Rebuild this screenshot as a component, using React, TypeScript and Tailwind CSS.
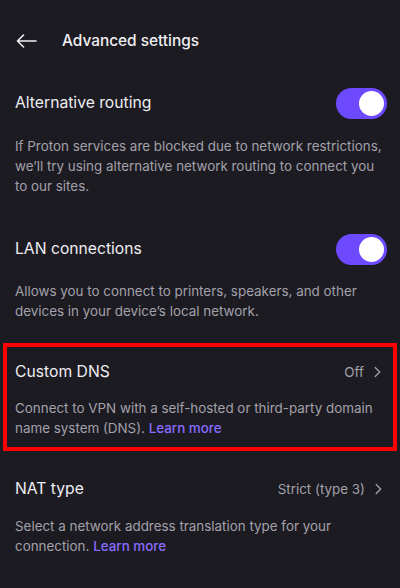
const font = { fontFamily: 'Inter, "Noto Sans", sans-serif' };

function Toggle() {
  return (
    <div className="flex h-[31px] w-[51px] items-center justify-end rounded-full bg-[#6d4aff] pr-[3px]">
      <div className="h-[25px] w-[25px] rounded-full bg-white" />
    </div>
  );
}

function Chevron() {
  return (
    <svg width="7" height="12" viewBox="0 0 7 12" fill="none" className="ml-[10px]">
      <path d="M1.2 1.5L5.7 6L1.2 10.5" stroke="#a3a1aa" strokeWidth="1.3" strokeLinecap="round" strokeLinejoin="round" />
    </svg>
  );
}

function Link() {
  return <span className="font-medium text-[#8a6cff]">Learn more</span>;
}

export default function App() {
  return (
    <div className="h-[588px] w-[400px] overflow-hidden bg-[#1c1b22] text-[#efeef2]" style={font}>
      <div className="flex h-[82px] items-center pl-[16px]">
        <svg width="21" height="14" viewBox="0 0 21 14" fill="none">
          <path d="M20 7H1.5M7.5 1L1.5 7L7.5 13" stroke="#efeef2" strokeWidth="1.6" strokeLinecap="round" strokeLinejoin="round" />
        </svg>
        <span className="ml-[25px] text-[15.4px] font-medium">Advanced settings</span>
      </div>

      <div className="pt-[5px] pl-[15px] pr-[13px]">
        <div className="flex h-8 items-center justify-between">
          <span className="text-[15.7px]">Alternative routing</span>
          <Toggle />
        </div>
        <p className="mt-[17px] pr-[4px] text-[13.4px] leading-[20px] text-[#a3a1aa]">
          If Proton services are blocked due to network restrictions, we’ll try using alternative network routing to connect you to our sites.
        </p>
      </div>

      <div className="mt-[37px] pl-[15px] pr-[13px]">
        <div className="flex h-8 items-center justify-between">
          <span className="text-[15.7px]">LAN connections</span>
          <Toggle />
        </div>
        <p className="mt-[16px] pr-[4px] text-[13.4px] leading-[20px] text-[#a3a1aa]">
          Allows you to connect to printers, speakers, and other devices in your device’s local network.
        </p>
      </div>

      <div className="mx-[3px] mt-[22px] border-4 border-[#ff0000] pt-[13px] pb-[9px] pl-[8px] pr-[12px]">
        <div className="flex h-6 items-center justify-between">
          <span className="text-[15.7px]">Custom DNS</span>
          <div className="flex items-center text-[13.4px] text-[#a3a1aa]">
            Off
            <Chevron />
          </div>
        </div>
        <p className="mt-[14px] text-[13.4px] leading-[20px] text-[#a3a1aa]">
          Connect to VPN with a self-hosted or third-party domain name system (DNS). <Link />
        </p>
      </div>

      <div className="mt-[26px] pl-[15px] pr-[18px]">
        <div className="flex h-6 items-center justify-between">
          <span className="text-[15.7px]">NAT type</span>
          <div className="flex items-center text-[13.4px] text-[#a3a1aa]">
            Strict (type 3)
            <Chevron />
          </div>
        </div>
        <p className="mt-[15px] text-[13.4px] leading-[20px] text-[#a3a1aa]">
          Select a network address translation type for your connection. <Link />
        </p>
      </div>
    </div>
  );
}
